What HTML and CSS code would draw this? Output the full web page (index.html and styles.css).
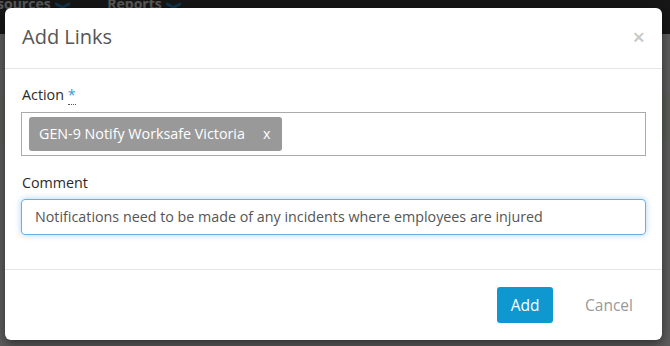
FILE: index.html
```html
<!DOCTYPE html>
<html>
<head>
<meta charset="utf-8">
<link rel="stylesheet" href="styles.css">
</head>
<body>
<div class="page">
  <div class="navbar">
    <span class="nav-item nav-first">sources <span class="chev">&#10095;</span></span>
    <span class="nav-item">Reports <span class="chev">&#10095;</span></span>
  </div>
  <div class="content">
    <div class="stripe"></div>
  </div>
</div>
<div class="backdrop"></div>
<div class="modal">
  <div class="modal-header">
    <h4 class="modal-title">Add Links</h4>
    <span class="close">&times;</span>
  </div>
  <div class="modal-body">
    <div class="form-group">
      <label class="label label-action">Action <abbr class="req" title="required">*</abbr></label>
      <div class="select-box">
        <span class="tag">GEN-9 Notify Worksafe Victoria<span class="tag-x">x</span></span>
      </div>
    </div>
    <div class="form-group">
      <label class="label label-comment">Comment</label>
      <div class="input">Notifications need to be made of any incidents where employees are injured</div>
    </div>
  </div>
  <div class="modal-footer">
    <button class="btn btn-primary">Add</button>
    <button class="btn btn-link">Cancel</button>
  </div>
</div>
</body>
</html>
```

FILE: styles.css
```css
* { box-sizing: border-box; }
html, body { margin: 0; padding: 0; }
body {
  width: 670px;
  height: 346px;
  overflow: hidden;
  font-family: "Open Sans", "Noto Sans", sans-serif;
  background: #f2f2f2;
  position: relative;
}
.page { height: 346px; display: flex; flex-direction: column; }
.navbar {
  height: 37px;
  background: #3a3a3a;
  display: flex;
  align-items: flex-start;
  gap: 38px;
  font-weight: 700;
  font-size: 14px;
  color: #e6e6e6;
  line-height: 14px;
  margin-top: -3px;
  padding-top: 0;
}
.nav-item { white-space: nowrap; }
.nav-first { margin-left: -3px; }
.chev { display: inline-block; transform: rotate(90deg) scaleY(1.3); color: #2a8fd0; font-size: 11px; margin-left: 6px; }
.content { flex: 1; background: #f4f4f4; position: relative; }
.stripe { margin-top: 60px; height: 48px; background: #eef3e8; }
.backdrop {
  position: absolute;
  inset: 0;
  background: rgba(0, 0, 0, 0.62);
}
.modal {
  position: absolute;
  left: 5px;
  top: 8px;
  width: 657px;
  height: 332px;
  background: #fff;
  border-radius: 6px;
  box-shadow: 0 4px 12px rgba(0, 0, 0, 0.5);
  display: flex;
  flex-direction: column;
}
.modal-header {
  height: 61px;
  border-bottom: 1px solid #e5e5e5;
  padding: 0 17px 0 17px;
  display: flex;
  align-items: center;
  justify-content: space-between;
}
.modal-title {
  margin: 0;
  font-size: 20px;
  font-weight: 400;
  color: #555;
  line-height: 28px;
  padding-bottom: 2px;
}
.close {
  color: #c8c8c8;
  font-size: 22px;
  font-weight: 600;
  line-height: 20px;
  margin-top: -5px;
}
.modal-body {
  height: 201px;
  padding: 16px 16px 0 16px;
  border-bottom: 1px solid #e5e5e5;
}
.form-group { display: flex; flex-direction: column; }
.label {
  font-size: 14.3px;
  font-weight: 500;
  color: #2a2a2a;
  line-height: 20px;
  padding-left: 1px;
}
.label-action { margin-bottom: 7px; }
.label-comment { margin-top: 17px; margin-bottom: 6px; }
.req {
  color: #3a9ad9;
  text-decoration: none;
  border-bottom: 1px dotted #555;
  cursor: help;
}
.select-box {
  height: 44px;
  border: 1px solid #aaa;
  padding: 4px 7px;
  display: flex;
  align-items: center;
}
.tag {
  height: 34px;
  background: #999;
  border-radius: 3px;
  color: #fff;
  font-size: 14.3px;
  line-height: 34px;
  padding: 0 12px 0 10px;
  display: inline-flex;
  white-space: nowrap;
}
.tag-x { margin-left: 18px; }
.input {
  height: 36px;
  border: 1px solid #66afe9;
  border-radius: 4px;
  box-shadow: 0 0 6px rgba(102, 175, 233, 0.55);
  padding: 0 13px;
  font-size: 14.3px;
  line-height: 34px;
  color: #555;
  white-space: nowrap;
}
.modal-footer {
  flex: 1;
  display: flex;
  justify-content: flex-end;
  align-items: center;
  padding: 0 17px 0 0;
  gap: 20px;
}
.btn {
  height: 36px;
  border: none;
  border-radius: 3px;
  font-family: "Open Sans", "Noto Sans", sans-serif;
  font-size: 15.5px;
  padding: 0 14px;
  line-height: 36px;
  cursor: pointer;
}
.btn-primary { background: #0f98d0; color: #fff; width: 56px; padding: 0; }
.btn-link { background: transparent; color: #999; padding: 0 12px; }
```
